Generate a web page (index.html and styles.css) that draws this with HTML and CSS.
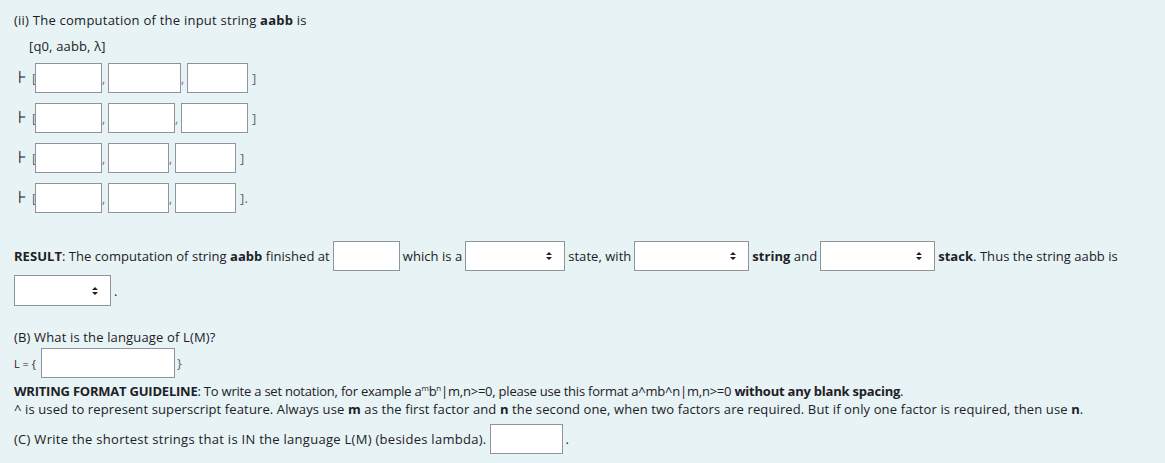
FILE: index.html
```html
<!DOCTYPE html>
<html lang="en">
<head>
<meta charset="utf-8">
<title>Computation</title>
<link rel="stylesheet" href="styles.css">
</head>
<body>
<div class="formulation">
  <p class="line intro">(ii) The computation of the input string <b>aabb</b> is</p>
  <p class="line start">[q0, aabb, λ]</p>
  <div class="steps">
    <div class="step">
      <span class="turn">⊦</span><span class="br">[</span><input class="w67" type="text"><span class="cm">,</span><input class="w73" type="text"><span class="cm">,</span><input class="w61" type="text"><span class="br close">]</span>
    </div>
    <div class="step">
      <span class="turn">⊦</span><span class="br">[</span><input class="w67" type="text"><span class="cm">,</span><input class="w67" type="text"><span class="cm">,</span><input class="w67" type="text"><span class="br close">]</span>
    </div>
    <div class="step">
      <span class="turn">⊦</span><span class="br">[</span><input class="w67" type="text"><span class="cm">,</span><input class="w61" type="text"><span class="cm">,</span><input class="w61" type="text"><span class="br close">]</span>
    </div>
    <div class="step">
      <span class="turn">⊦</span><span class="br">[</span><input class="w67" type="text"><span class="cm">,</span><input class="w61" type="text"><span class="cm">,</span><input class="w61" type="text"><span class="br close">].</span>
    </div>
  </div>

  <div class="result">
    <div class="row">
      <span><b>RESULT</b>: The computation of string <b>aabb</b> finished at</span>
      <input class="w67" type="text">
      <span>which is a</span>
      <select class="sel w100"><option></option></select>
      <span>state, with</span>
      <select class="sel w115"><option></option></select>
      <span><b>string</b> and</span>
      <select class="sel w115"><option></option></select>
      <span><b>stack</b>. Thus the string aabb is</span>
    </div>
    <div class="row second">
      <select class="sel w97"><option></option></select><span class="dot">.</span>
    </div>
  </div>

  <p class="line qb">(B) What is the language of L(M)?</p>
  <div class="row lrow">
    <span class="small">L = {</span><input class="w134" type="text"><span class="brace">}</span>
  </div>

  <div class="guide">
    <p class="gline g1"><b>WRITING FORMAT GUIDELINE</b>: To write a set notation, for example a<sup>m</sup>b<sup>n</sup>|m,n&gt;=0, please use this format a^mb^n|m,n&gt;=0 <b>without any blank spacing</b>.</p>
    <p class="gline">^ is used to represent superscript feature. Always use <b>m</b> as the first factor and <b>n</b> the second one, when two factors are required. But if only one factor is required, then use <b>n</b>.</p>
  </div>

  <div class="row qc">
    <span class="qctext">(C) Write the shortest strings that is IN the language L(M) (besides lambda).</span><input class="w73" type="text"><span class="dot">.</span>
  </div>
</div>
</body>
</html>
```
FILE: styles.css
```css
* { box-sizing: border-box; }
html, body { margin: 0; background: #e7f3f5; }
body {
  font-family: "Open Sans", "Liberation Sans", sans-serif;
  font-size: 13px;
  letter-spacing: 0.15px;
  color: #1d2125;
}
b { font-weight: 700; }
.formulation { padding: 10px 14px 0; }
.line { margin: 0; line-height: 20px; }
.intro { letter-spacing: 0.24px; }
.start { margin-top: 6px; padding-left: 15px; }

input, select {
  height: 30px;
  border: 1px solid #8f959e;
  background: #fff;
  border-radius: 0;
  margin: 0;
  padding: 0 6px;
  font: inherit;
}
.w61 { width: 61px; }
.w67 { width: 67px; }
.w73 { width: 73px; }
.w97 { width: 97px; }
.w100 { width: 100px; }
.w115 { width: 115px; }
.w134 { width: 134px; }

.steps { margin-top: 7px; display: flex; flex-direction: column; gap: 10px; }
.step { display: flex; align-items: baseline; padding-left: 4px; height: 30px; }
.turn {
  font-family: "DejaVu Sans", sans-serif;
  font-size: 17px;
  width: 14px;
  line-height: 1;
}
.br { width: 3px; color: #5f6670; }
.cm { width: 6px; color: #6a7078; font-size: 12px; }
.close { margin-left: 4px; width: auto; }

.result { margin-top: 28px; display: flex; flex-direction: column; gap: 4px; letter-spacing: 0.04px; }
.row { display: flex; align-items: center; gap: 3px; }
.row > span { white-space: nowrap; }
.sel {
  appearance: none;
  -webkit-appearance: none;
  background-image: url("data:image/svg+xml,%3Csvg xmlns='http://www.w3.org/2000/svg' width='6' height='8' viewBox='0 0 6 8'%3E%3Cpath d='M3 0L6 3H0Z M3 8L6 5H0Z' fill='%231d2125'/%3E%3C/svg%3E");
  background-repeat: no-repeat;
  background-position: right 12px center;
  background-size: 6px 8px;
}
.second .sel { height: 31px; }

.qb { margin-top: 21px; }
.lrow { margin-top: 1px; gap: 0; }
.small { font-size: 11px; width: 27px; letter-spacing: 0; }
.brace { margin-left: 2px; color: #5f6670; }

.guide { margin-top: 4px; }
.gline { margin: 0; line-height: 18px; font-size: 13px; letter-spacing: 0.12px; }
.g1 { letter-spacing: -0.22px; }
sup { font-size: 8px; line-height: 0; vertical-align: 5px; }

.qc { margin-top: 6px; gap: 3px; }
.qctext { letter-spacing: 0.28px; }
```
